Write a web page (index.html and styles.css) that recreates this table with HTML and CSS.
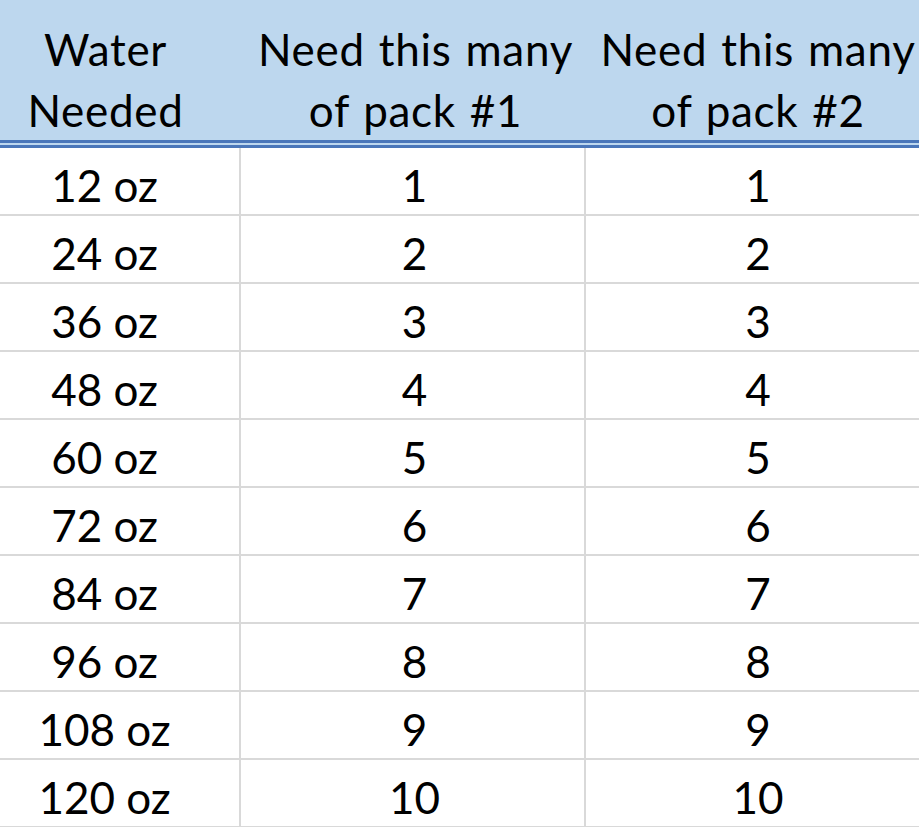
FILE: index.html
```html
<!DOCTYPE html>
<html>
<head>
<meta charset="utf-8">
<link rel="stylesheet" href="styles.css">
</head>
<body>
<div class="sheet">
  <div class="row head">
    <div class="cell c1">Water<br>Needed</div>
    <div class="cell c2">Need this many<br>of pack #1</div>
    <div class="cell c3">Need this many<br>of pack #2</div>
  </div>
  <div class="row"><div class="cell c1">12 oz</div><div class="cell c2">1</div><div class="cell c3">1</div></div>
  <div class="row"><div class="cell c1">24 oz</div><div class="cell c2">2</div><div class="cell c3">2</div></div>
  <div class="row"><div class="cell c1">36 oz</div><div class="cell c2">3</div><div class="cell c3">3</div></div>
  <div class="row"><div class="cell c1">48 oz</div><div class="cell c2">4</div><div class="cell c3">4</div></div>
  <div class="row"><div class="cell c1">60 oz</div><div class="cell c2">5</div><div class="cell c3">5</div></div>
  <div class="row"><div class="cell c1">72 oz</div><div class="cell c2">6</div><div class="cell c3">6</div></div>
  <div class="row"><div class="cell c1">84 oz</div><div class="cell c2">7</div><div class="cell c3">7</div></div>
  <div class="row"><div class="cell c1">96 oz</div><div class="cell c2">8</div><div class="cell c3">8</div></div>
  <div class="row"><div class="cell c1">108 oz</div><div class="cell c2">9</div><div class="cell c3">9</div></div>
  <div class="row"><div class="cell c1">120 oz</div><div class="cell c2">10</div><div class="cell c3">10</div></div>
</div>
</body>
</html>
```
FILE: styles.css
```css
html, body {
  margin: 0;
  padding: 0;
  background: #ffffff;
  overflow: hidden;
}
.sheet {
  width: 919px;
  font-family: "Lato", "Open Sans", sans-serif;
  font-size: 44px;
  color: #000;
}
.row {
  display: grid;
  grid-template-columns: 241px 345px 333px;
  height: 68px;
  box-sizing: border-box;
  border-bottom: 2px solid #d9d9d9;
}
.row.head {
  height: 148px;
  background: #bdd7ee;
  border-bottom: 8px double #4a76b9;
}
.cell {
  display: flex;
  align-items: flex-start;
  justify-content: center;
  text-align: center;
  box-sizing: border-box;
  line-height: 50px;
  padding-top: 12px;
  white-space: nowrap;
}
.head .cell {
  line-height: 61px;
  padding-top: 19px;
  letter-spacing: 0.7px;
  word-spacing: 2px;
  border-right: none !important;
}
.c1 {
  padding-right: 30px;
  border-right: 2px solid #d9d9d9;
}
.c2 {
  padding-left: 4px;
  border-right: 2px solid #d9d9d9;
}
.c3 {
  padding-left: 11px;
}
```
